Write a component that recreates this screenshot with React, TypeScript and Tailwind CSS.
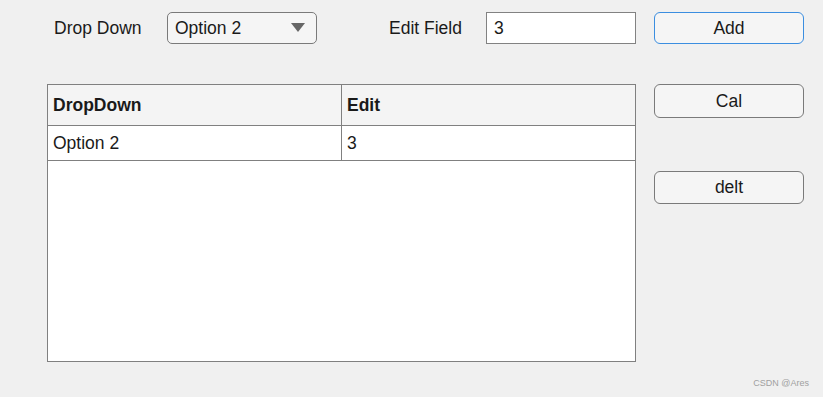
export default function App() {
  const font = { fontFamily: '"Liberation Sans", Arial, sans-serif' }
  return (
    <div className="relative h-[397px] w-[823px] bg-[#f0f0f0] text-[17.5px] text-[#1a1a1a]" style={font}>
      <div className="flex pt-[12px]">
        {/* left column */}
        <div className="ml-[47px] w-[589px]">
          <div className="flex h-[32px] items-center">
            <span className="ml-[7px] w-[113px]">Drop Down</span>
            <div className="flex h-[32px] w-[150px] items-center justify-between rounded-[5px] border border-[#7a7a7a] bg-[#f5f5f5] pl-[7px] pr-[11px]">
              <span>Option 2</span>
              <svg width="14" height="10" viewBox="0 0 14 10">
                <polygon points="0,0 14,0 7,9" fill="#666" />
              </svg>
            </div>
            <span className="ml-[72px] w-[97px]">Edit Field</span>
            <div className="flex h-[32px] w-[150px] items-center border border-[#828282] bg-white pl-[7px]">3</div>
          </div>

          <div className="mt-[40px] flex h-[278px] flex-col border border-[#808080] bg-white">
            <div className="flex h-[41px] border-b border-[#808080] bg-[#f4f4f4] font-bold">
              <div className="flex w-[294px] items-center border-r border-[#808080] pl-[5px]">DropDown</div>
              <div className="flex flex-1 items-center pl-[5px]">Edit</div>
            </div>
            <div className="flex h-[35px] border-b border-[#808080]">
              <div className="flex w-[294px] items-center border-r border-[#808080] pl-[5px]">Option 2</div>
              <div className="flex flex-1 items-center pl-[5px]">3</div>
            </div>
          </div>
        </div>

        {/* right buttons */}
        <div className="ml-[18px] flex w-[150px] flex-col">
          <button className="h-[32px] rounded-[6px] border border-[#3b8ee0] bg-[#f5f5f5] text-center">Add</button>
          <button className="mt-[40px] h-[34px] rounded-[6px] border border-[#7a7a7a] bg-[#f5f5f5] text-center">Cal</button>
          <button className="mt-[53px] h-[33px] rounded-[6px] border border-[#7a7a7a] bg-[#f5f5f5] text-center">delt</button>
        </div>
      </div>
      <div className="absolute right-[14px] top-[377px] text-[9px] text-[#a0a0a0]">CSDN @Ares</div>
    </div>
  )
}
